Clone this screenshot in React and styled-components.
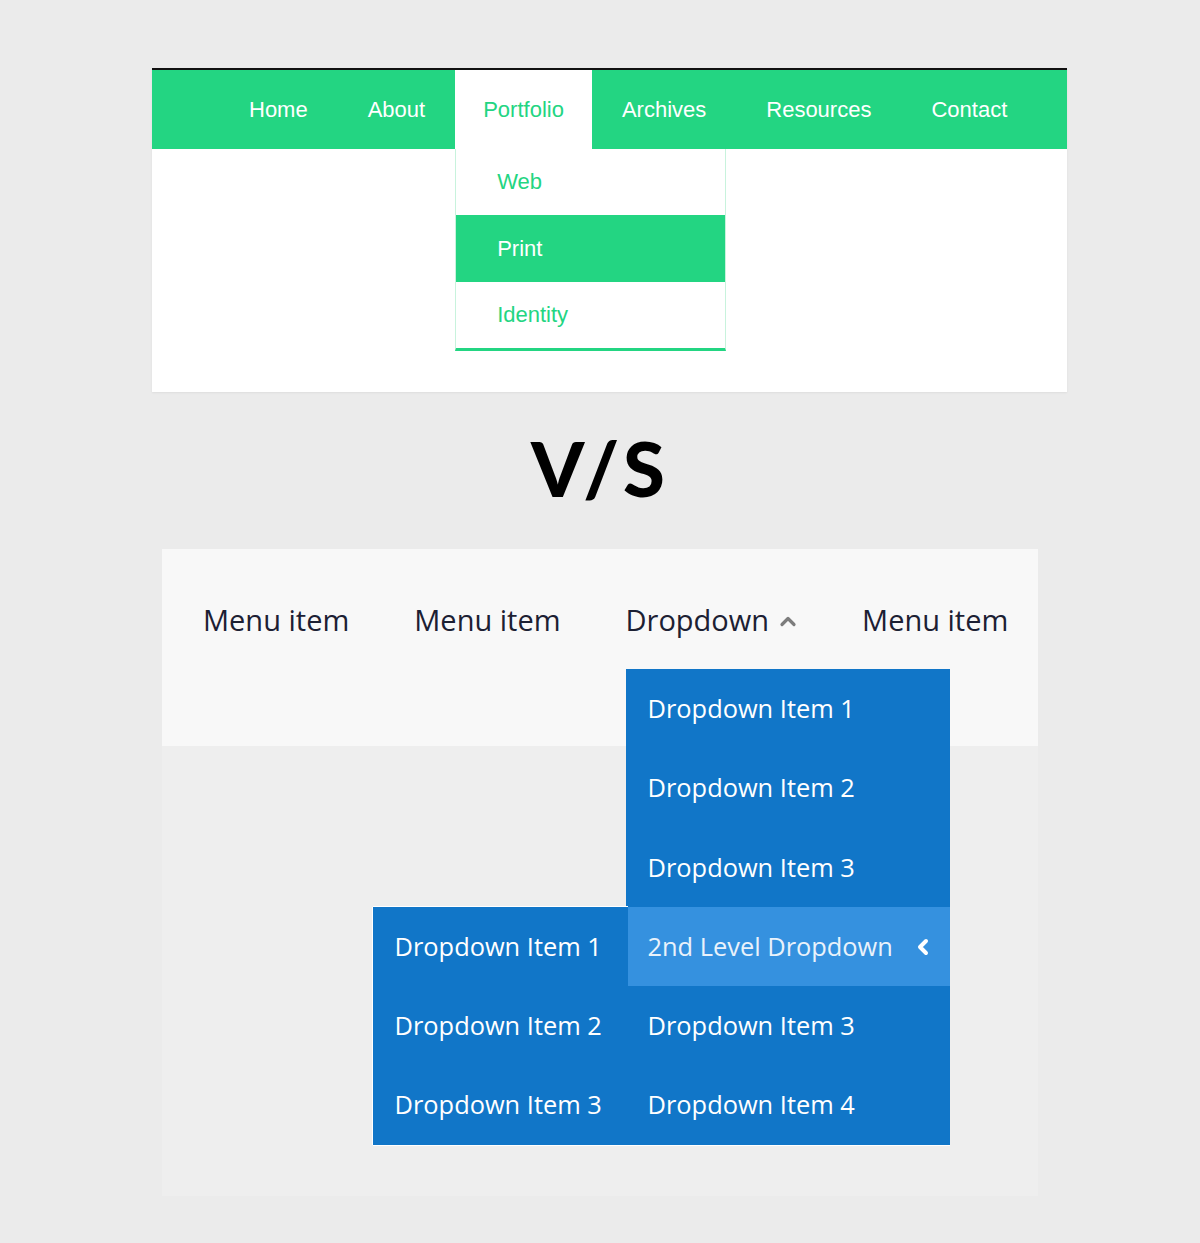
import styled, { createGlobalStyle } from 'styled-components'

const GREEN = '#23d582'
const BLUE = '#1176c8'
const BLUE_LIGHT = '#3591df'

const GlobalStyle = createGlobalStyle`
  body {
    margin: 0;
    background: #ebebeb;
    font-family: 'Liberation Sans', Arial, sans-serif;
  }
`

const Page = styled.div`
  width: 1200px;
  padding-top: 68px;
  padding-bottom: 47px;
`

/* ---------- flat green menu ---------- */

const FlatPanel = styled.section`
  width: 915px;
  height: 324px;
  margin-left: 152px;
  background: #fff;
  box-shadow: 0 1px 2px rgba(0, 0, 0, 0.06);
`

const GreenBar = styled.ul`
  display: flex;
  height: 79px;
  margin: 0;
  padding: 0 0 0 67px;
  list-style: none;
  background: ${GREEN};
  border-top: 2px solid #111;
`

const GreenItem = styled.li`
  position: relative;
  display: flex;
  align-items: center;
  padding: 0 ${p => (p.$active ? '28px' : '30px')};
  font-size: 22px;
  color: ${p => (p.$active ? GREEN : '#fff')};
  background: ${p => (p.$active ? '#fff' : 'transparent')};
`

const FlatMenu = styled.ul`
  position: absolute;
  top: 100%;
  left: 0;
  width: 271px;
  margin: 0;
  padding: 0;
  list-style: none;
  background: #fff;
  border-left: 1px solid #c8f3dd;
  border-right: 1px solid #c8f3dd;
  border-bottom: 3px solid ${GREEN};
  box-sizing: border-box;
  z-index: 2;
`

const FlatMenuItem = styled.li`
  display: flex;
  align-items: center;
  height: 66px;
  padding-left: 41px;
  font-size: 22px;
  color: ${p => (p.$selected ? '#fff' : GREEN)};
  background: ${p => (p.$selected ? GREEN : '#fff')};
  border-top: ${p => (p.$selected ? `1px solid ${GREEN}` : 'none')};
`

/* ---------- versus heading ---------- */

const Versus = styled.div`
  display: flex;
  align-items: center;
  justify-content: center;
  height: 157px;
  padding-bottom: 6px;
  box-sizing: border-box;
  font-family: Lato, 'DejaVu Sans', sans-serif;
  font-weight: 900;
  font-size: 76px;
  color: #000;
  letter-spacing: 4px;
`

/* ---------- blue multi-level menu ---------- */

const BluePanel = styled.section`
  width: 876px;
  height: 647px;
  margin-left: 162px;
  background: #eeeeee;
  font-family: 'Open Sans', 'Noto Sans', sans-serif;
`

const Header = styled.nav`
  display: flex;
  align-items: flex-start;
  gap: 65px;
  height: 197px;
  padding: 50px 0 0 41px;
  box-sizing: border-box;
  background: #f8f8f8;
`

const TopItem = styled.div`
  position: relative;
  display: flex;
  align-items: center;
  gap: 10px;
  line-height: 42px;
  font-size: 29px;
  color: #1c2033;
`

const BlueMenu = styled.ul`
  position: absolute;
  top: 70px;
  left: 0;
  width: 324px;
  margin: 0;
  padding: 0;
  list-style: none;
  background: ${BLUE};
  box-shadow: 0 1px 0 #fff;
  z-index: 2;
`

const SubMenu = styled(BlueMenu)`
  top: 0;
  left: auto;
  right: 100%;
  width: 255px;
  box-shadow: 0 -1px 0 #fff, -1px 0 0 #fff, 0 1px 0 #fff;
`

const BlueItem = styled.li`
  position: relative;
  display: flex;
  align-items: center;
  height: 79.3px;
  padding: 0 20px 0 ${p => (p.$open ? '20px' : '22px')};
  font-size: 25.4px;
  line-height: 1;
  color: ${p => (p.$open ? '#e9f2fb' : '#fff')};
  background: ${p => (p.$open ? BLUE_LIGHT : BLUE)};
  border-left: ${p => (p.$open ? `2px solid ${BLUE}` : 'none')};
`

const Caret = styled.svg`
  margin-left: auto;
  flex: none;
`

const ChevronUp = () => (
  <svg width="18" height="12" viewBox="0 0 18 12" style={{ marginTop: 2 }}>
    <polyline points="3,9.5 9,3.5 15,9.5" fill="none" stroke="#7d7d7d" strokeWidth="3.2" strokeLinecap="round" strokeLinejoin="round" />
  </svg>
)

const ChevronLeft = () => (
  <Caret width="14" height="18" viewBox="0 0 14 18">
    <polyline points="10,3 4,9 10,15" fill="none" stroke="#fff" strokeWidth="4" strokeLinecap="round" strokeLinejoin="round" />
  </Caret>
)

const greenLinks = ['Home', 'About', 'Portfolio', 'Archives', 'Resources', 'Contact']

export default function App() {
  return (
    <Page>
      <GlobalStyle />
      <FlatPanel>
        <GreenBar>
          {greenLinks.map(label => (
            <GreenItem key={label} $active={label === 'Portfolio'}>
              {label}
              {label === 'Portfolio' && (
                <FlatMenu>
                  <FlatMenuItem>Web</FlatMenuItem>
                  <FlatMenuItem $selected>Print</FlatMenuItem>
                  <FlatMenuItem>Identity</FlatMenuItem>
                </FlatMenu>
              )}
            </GreenItem>
          ))}
        </GreenBar>
      </FlatPanel>

      <Versus>V/S</Versus>

      <BluePanel>
        <Header>
          <TopItem>Menu item</TopItem>
          <TopItem>Menu item</TopItem>
          <TopItem>
            Dropdown
            <ChevronUp />
            <BlueMenu>
              <BlueItem>Dropdown Item 1</BlueItem>
              <BlueItem>Dropdown Item 2</BlueItem>
              <BlueItem>Dropdown Item 3</BlueItem>
              <BlueItem $open>
                2nd Level Dropdown
                <ChevronLeft />
                <SubMenu>
                  <BlueItem>Dropdown Item 1</BlueItem>
                  <BlueItem>Dropdown Item 2</BlueItem>
                  <BlueItem>Dropdown Item 3</BlueItem>
                </SubMenu>
              </BlueItem>
              <BlueItem>Dropdown Item 3</BlueItem>
              <BlueItem>Dropdown Item 4</BlueItem>
            </BlueMenu>
          </TopItem>
          <TopItem>Menu item</TopItem>
        </Header>
      </BluePanel>
    </Page>
  )
}
